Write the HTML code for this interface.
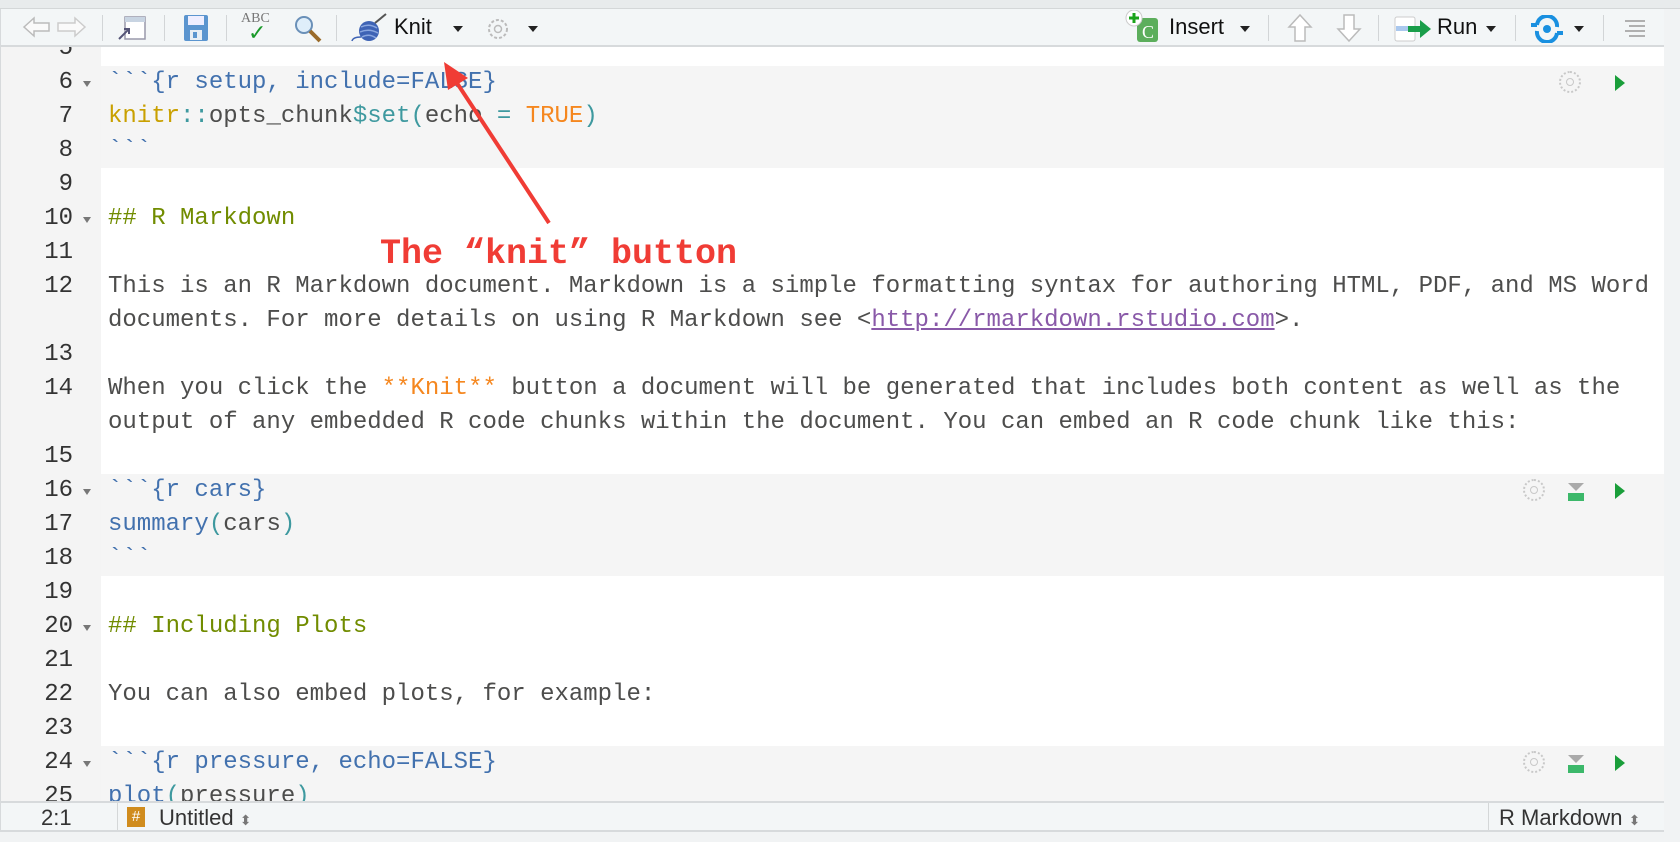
<!DOCTYPE html>
<html><head><meta charset="utf-8"><style>
*{margin:0;padding:0;box-sizing:border-box}
body{width:1680px;height:842px;overflow:hidden;background:#f1f3f4;position:relative;font-family:"Liberation Sans",sans-serif}
#tabs{position:absolute;left:0;top:0;width:1680px;height:9px;background:#e8ebec;border-bottom:1px solid #d4d7d8}
#tb{position:absolute;left:0;top:9px;width:1664px;height:38px;background:#f3f6f7;border-bottom:2px solid #d7dadc;border-left:1px solid #d7dadc}
.sep{position:absolute;top:6px;width:1px;height:26px;background:#d2d5d7}
.tt{position:absolute;top:5px;font-size:22px;color:#111}
.dd{position:absolute;top:17px;width:0;height:0;border-left:5px solid transparent;border-right:5px solid transparent;border-top:6px solid #222}
#ed{position:absolute;left:0;top:47px;width:1664px;height:754px;background:#fff;overflow:hidden;border-left:1px solid #d7dadc}
#gut{position:absolute;left:0;top:0;width:100px;height:754px;background:#f4f4f4}
.chunk{position:absolute;left:100px;width:1564px;background:#f5f5f5}
.r{position:absolute;left:0;height:34px;line-height:34px;font-family:"Liberation Mono",monospace;font-size:24px;white-space:pre;color:#4d4d4c}
.n{position:absolute;width:72px;text-align:right;color:#333}
.t{position:absolute;left:107px}
.fold{position:absolute;left:82px;top:15px;border-left:4px solid transparent;border-right:4px solid transparent;border-top:6px solid #777}
.b{color:#4271ae}.g{color:#718c00}.o{color:#f5871f}.k{color:#c9a000}.c{color:#3e999f}.p{color:#8959a8;text-decoration:underline}
.play{position:absolute;width:0;height:0;border-top:8px solid transparent;border-bottom:8px solid transparent;border-left:10px solid #1a9e3a}
.gear{position:absolute;width:22px;height:22px;border:2px dotted #c8c8c8;border-radius:50%}
.gear:after{content:"";position:absolute;left:5px;top:5px;width:6px;height:6px;border:1.5px solid #c8c8c8;border-radius:50%}
#sb{position:absolute;left:0;top:801px;width:1664px;height:31px;background:#f3f6f7;border-top:2px solid #d7dadc;border-bottom:2px solid #d7dadc;border-left:1px solid #d7dadc;font-size:22px;color:#333}
#ann{position:absolute;left:380px;top:234px;font-family:"Liberation Mono",monospace;font-weight:bold;font-size:35px;color:#f03c35;white-space:pre}
</style></head><body>
<div id="tabs"></div>
<div id="tb">
 <svg style="position:absolute;left:20px;top:5px" width="70" height="26"><path d="M3 13 L13 4 V9 H28 V17 H13 V22 Z" fill="#fafafa" stroke="#bbb" stroke-width="1.5"/><path d="M64 13 L54 4 V9 H37 V17 H54 V22 Z" fill="#fafafa" stroke="#ccc" stroke-width="1.5"/></svg>
 <div class="sep" style="left:101px"></div>
 <svg style="position:absolute;left:116px;top:6px" width="32" height="28"><rect x="8" y="2" width="20" height="22" fill="#fff" stroke="#99a" stroke-width="1.5"/><rect x="8" y="2" width="20" height="5" fill="#c8d4e2"/><path d="M2 24 L12 14 M7 14 H12 V19" stroke="#557" stroke-width="2" fill="none"/></svg>
 <div class="sep" style="left:163px"></div>
 <svg style="position:absolute;left:182px;top:5px" width="26" height="28"><rect x="1" y="1" width="24" height="26" rx="2" fill="#5b95cf"/><rect x="5" y="2" width="16" height="9" fill="#eef"/><rect x="7" y="16" width="12" height="10" fill="#e8eef5"/><rect x="10" y="18" width="4" height="6" fill="#5b95cf"/></svg>
 <div class="sep" style="left:225px"></div>
 <div style="position:absolute;left:240px;top:2px;font-family:'Liberation Serif',serif;font-size:14px;color:#777">ABC</div>
 <div style="position:absolute;left:247px;top:11px;font-size:22px;color:#1a9a2a">✓</div>
 <svg style="position:absolute;left:292px;top:5px" width="30" height="30"><circle cx="11" cy="11" r="8" fill="#dfeefa" stroke="#6a90b8" stroke-width="2"/><path d="M17 17 L27 27" stroke="#9a6b2a" stroke-width="4"/></svg>
 <div class="sep" style="left:335px"></div>
 <svg style="position:absolute;left:348px;top:4px" width="40" height="30"><circle cx="20" cy="18" r="10" fill="#3e63b5"/><path d="M12 14 Q20 10 28 15 M11 19 Q20 15 29 20 M13 24 Q20 20 27 25" stroke="#8aa7e0" stroke-width="1.5" fill="none"/><path d="M26 10 L37 1" stroke="#555" stroke-width="2"/><path d="M12 24 Q4 24 3 28" stroke="#3e63b5" stroke-width="1.5" fill="none"/></svg>
 <div class="tt" style="left:393px">Knit</div>
 <div class="dd" style="left:452px"></div>
 <svg style="position:absolute;left:484px;top:7px" width="26" height="26"><circle cx="13" cy="13" r="9" fill="none" stroke="#bbb" stroke-width="2" stroke-dasharray="3 2"/><circle cx="13" cy="13" r="3.5" fill="none" stroke="#bbb" stroke-width="1.5"/></svg>
 <div class="dd" style="left:527px"></div>
 <svg style="position:absolute;left:1124px;top:1px" width="34" height="34"><rect x="12" y="8" width="21" height="24" rx="3" fill="#5cae5c"/><text x="17" y="28" font-family="Liberation Serif" font-size="18" fill="#fff">C</text><circle cx="9" cy="8" r="8" fill="#fff" stroke="#ccc"/><path d="M9 3 V13 M4 8 H14" stroke="#1ca41c" stroke-width="3"/></svg>
 <div class="tt" style="left:1168px">Insert</div>
 <div class="dd" style="left:1239px"></div>
 <div class="sep" style="left:1267px"></div>
 <svg style="position:absolute;left:1286px;top:4px" width="26" height="30"><path d="M13 2 L24 14 H18 V28 H8 V14 H2 Z" fill="#fff" stroke="#bbb" stroke-width="1.5"/></svg>
 <svg style="position:absolute;left:1335px;top:4px" width="26" height="30"><path d="M13 28 L24 16 H18 V2 H8 V16 H2 Z" fill="#fff" stroke="#bbb" stroke-width="1.5"/></svg>
 <div class="sep" style="left:1377px"></div>
 <svg style="position:absolute;left:1393px;top:6px" width="42" height="28"><rect x="1" y="2" width="20" height="24" rx="2" fill="#fff" stroke="#ccc"/><rect x="2" y="11" width="12" height="5" fill="#aac8ee"/><path d="M14 14 H28" stroke="#1a9e4a" stroke-width="6"/><path d="M26 5 L37 14 L26 23 Z" fill="#1a9e4a"/></svg>
 <div class="tt" style="left:1436px">Run</div>
 <div class="dd" style="left:1485px"></div>
 <div class="sep" style="left:1514px"></div>
 <svg style="position:absolute;left:1528px;top:6px" width="36" height="28"><path d="M2 10 H8 M28 18 H34" stroke="#1a90e0" stroke-width="4"/><path d="M8 10 A10 10 0 0 1 28 12 M28 18 A10 10 0 0 1 8 16" stroke="#1a90e0" stroke-width="4" fill="none"/><circle cx="18" cy="14" r="4" fill="#1a90e0"/></svg>
 <div class="dd" style="left:1573px"></div>
 <div class="sep" style="left:1602px"></div>
 <svg style="position:absolute;left:1620px;top:10px" width="28" height="20"><path d="M4 2 H24 M8 7 H24 M4 12 H24 M8 17 H24" stroke="#999" stroke-width="1.5"/></svg>
</div>

<div id="ed">
 <div id="gut"></div>
 <div class="chunk" style="top:19px;height:102px"></div>
 <div class="chunk" style="top:427px;height:102px"></div>
 <div class="chunk" style="top:699px;height:60px"></div>
 <div class="r" style="top:-15px"><span class="n">5</span></div>
 <div class="r" style="top:19px"><span class="n">6</span><i class="fold"></i><span class="t b">&#96;&#96;&#96;{r setup, include=FALSE}</span></div>
 <div class="r" style="top:53px"><span class="n">7</span><span class="t"><span class="k">knitr</span><span class="c">::</span>opts_chunk<span class="c">$set(</span>echo <span class="c">=</span> <span class="o">TRUE</span><span class="c">)</span></span></div>
 <div class="r" style="top:87px"><span class="n">8</span><span class="t b">&#96;&#96;&#96;</span></div>
 <div class="r" style="top:121px"><span class="n">9</span></div>
 <div class="r" style="top:155px"><span class="n">10</span><i class="fold"></i><span class="t g">## R Markdown</span></div>
 <div class="r" style="top:189px"><span class="n">11</span></div>
 <div class="r" style="top:223px"><span class="n">12</span><span class="t">This is an R Markdown document. Markdown is a simple formatting syntax for authoring HTML, PDF, and MS Word</span></div>
 <div class="r" style="top:257px"><span class="t">documents. For more details on using R Markdown see &lt;<span class="p">http://rmarkdown.rstudio.com</span>&gt;.</span></div>
 <div class="r" style="top:291px"><span class="n">13</span></div>
 <div class="r" style="top:325px"><span class="n">14</span><span class="t">When you click the <span class="o">**Knit**</span> button a document will be generated that includes both content as well as the</span></div>
 <div class="r" style="top:359px"><span class="t">output of any embedded R code chunks within the document. You can embed an R code chunk like this:</span></div>
 <div class="r" style="top:393px"><span class="n">15</span></div>
 <div class="r" style="top:427px"><span class="n">16</span><i class="fold"></i><span class="t b">&#96;&#96;&#96;{r cars}</span></div>
 <div class="r" style="top:461px"><span class="n">17</span><span class="t"><span class="b">summary</span><span class="c">(</span>cars<span class="c">)</span></span></div>
 <div class="r" style="top:495px"><span class="n">18</span><span class="t b">&#96;&#96;&#96;</span></div>
 <div class="r" style="top:529px"><span class="n">19</span></div>
 <div class="r" style="top:563px"><span class="n">20</span><i class="fold"></i><span class="t g">## Including Plots</span></div>
 <div class="r" style="top:597px"><span class="n">21</span></div>
 <div class="r" style="top:631px"><span class="n">22</span><span class="t">You can also embed plots, for example:</span></div>
 <div class="r" style="top:665px"><span class="n">23</span></div>
 <div class="r" style="top:699px"><span class="n">24</span><i class="fold"></i><span class="t b">&#96;&#96;&#96;{r pressure, echo=FALSE}</span></div>
 <div class="r" style="top:733px"><span class="n">25</span><span class="t"><span class="b">plot</span><span class="c">(</span>pressure<span class="c">)</span></span></div>
 <div class="gear" style="left:1558px;top:24px"></div><div class="play" style="left:1614px;top:28px"></div>
 <div class="gear" style="left:1522px;top:432px"></div><svg style="position:absolute;left:1565px;top:434px" width="20" height="22"><path d="M2 2 H18 L10 10 Z" fill="#aaa"/><rect x="2" y="12" width="16" height="8" fill="#3cb86a"/></svg><div class="play" style="left:1614px;top:436px"></div>
 <div class="gear" style="left:1522px;top:704px"></div><svg style="position:absolute;left:1565px;top:706px" width="20" height="22"><path d="M2 2 H18 L10 10 Z" fill="#aaa"/><rect x="2" y="12" width="16" height="8" fill="#3cb86a"/></svg><div class="play" style="left:1614px;top:708px"></div>
</div>

<div id="sb">
 <div style="position:absolute;left:40px;top:2px">2:1</div>
 <div style="position:absolute;left:116px;top:0;width:1px;height:27px;background:#d4d7d8"></div>
 <div style="position:absolute;left:126px;top:4px;width:18px;height:20px;background:#d08c1e;color:#fff;font-size:15px;text-align:center;line-height:20px">#</div>
 <div style="position:absolute;left:158px;top:2px">Untitled <span style="font-size:14px;color:#777">⬍</span></div>
 <div style="position:absolute;left:1487px;top:0;width:1px;height:27px;background:#d4d7d8"></div>
 <div style="position:absolute;left:1498px;top:2px">R Markdown <span style="font-size:14px;color:#777">⬍</span></div>
</div>

<div id="ann">The “knit” button</div>
<svg style="position:absolute;left:0;top:0" width="1680" height="842"><path d="M549 223 L455 80" stroke="#f03c35" stroke-width="4"/><path d="M444 62 L468 78 L448 90 Z" fill="#f03c35"/></svg>
</body></html>
